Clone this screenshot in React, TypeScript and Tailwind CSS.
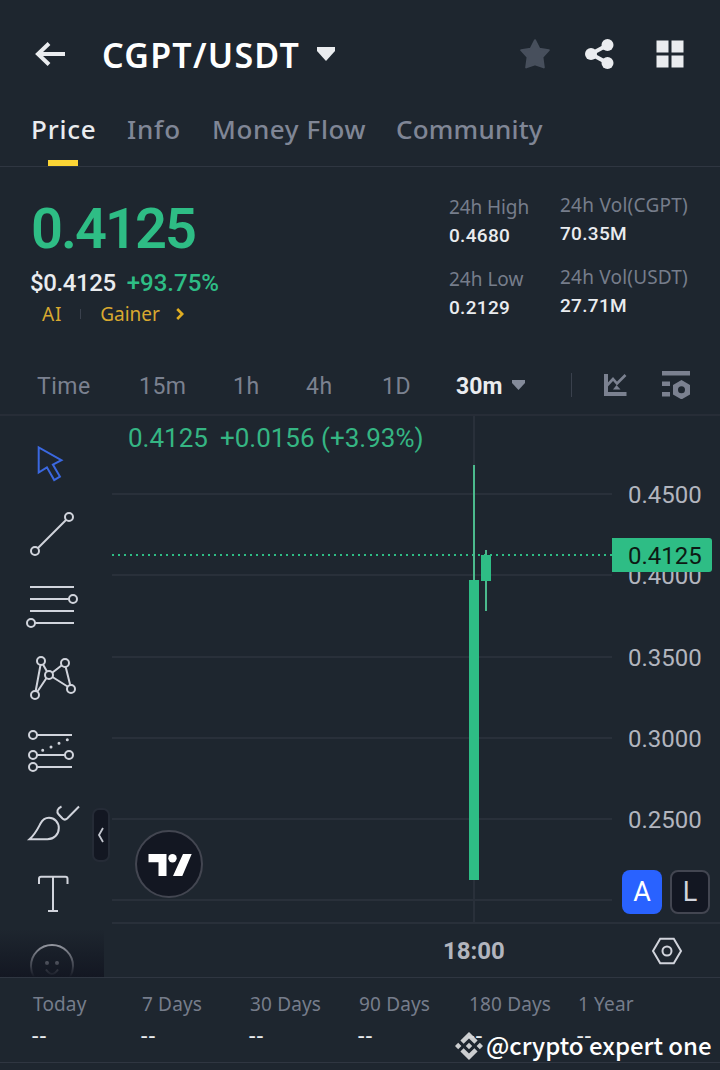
import type { ReactNode } from "react"

const TABS = [
  { label: "Price", width: "w-[96px]", tracking: "tracking-[0.800px]" },
  { label: "Info", width: "w-[85px]", tracking: "tracking-[0.800px]" },
  { label: "Money Flow", width: "w-[184px]", tracking: "tracking-[0.600px]" },
  { label: "Community", width: "w-[160px]", tracking: "tracking-[0.200px]" },
]

const INTERVALS = [
  { label: "Time", width: "w-[102px]" },
  { label: "15m", width: "w-[94px]" },
  { label: "1h", width: "w-[73px]" },
  { label: "4h", width: "w-[76px]" },
  { label: "1D", width: "w-[74px]" },
]

const PERIODS = [
  { label: "Today", width: "w-[109px]" },
  { label: "7 Days", width: "w-[108px]" },
  { label: "30 Days", width: "w-[109px]" },
  { label: "90 Days", width: "w-[110px]" },
  { label: "180 Days", width: "w-[109px]" },
  { label: "1 Year", width: "w-[100px]" },
]

const AXIS = ["0.4500", "0.4000", "0.3500", "0.3000", "0.2500"]
const GRID_LINES = [78, 159, 241, 322, 403, 484]

function Tool({ children, color = "#d1d4dc" }: { children: ReactNode; color?: string }) {
  return (
    <svg
      width="104"
      height="72"
      viewBox="0 0 104 72"
      fill="none"
      stroke={color}
      strokeWidth="2"
      className="block shrink-0"
    >
      {children}
    </svg>
  )
}

function Header() {
  return (
    <header className="flex h-[110px] items-center pl-[35px] pr-9">
      <svg width="30" height="24" viewBox="0 0 30 24" fill="none" stroke="#eaecef" strokeWidth="4" className="mb-0.5">
        <path d="M30 12H3M14 1.500L3 12l11 10.500" />
      </svg>
      <h1 className="ml-[37px] w-[198px] whitespace-nowrap font-['Noto_Sans'] text-[34px] leading-none font-semibold tracking-[1.250px] text-white">
        CGPT/USDT
      </h1>
      <svg width="18" height="14" viewBox="0 0 18 14" fill="#eaecef" className="mb-0.5 ml-[17px]">
        <path d="M0 0h18v4L9 14 0 4z" />
      </svg>
      <div className="mb-0.5 ml-auto flex items-center">
        <svg width="30" height="30" viewBox="0 0 30 30" fill="#474f5c" stroke="#474f5c" strokeWidth="2" strokeLinejoin="round">
          <path d="M15 1.200l4.300 8.600 9.500 1.400-6.400 7 1.400 10.200L15 25.200l-8.800 3.200 1.400-10.200-6.400-7 9.500-1.400z" />
        </svg>
        <svg width="30" height="30" viewBox="0 0 30 30" fill="#eaecef" className="ml-[35px]">
          <path d="M22.500 6L6 15l16.500 9" fill="none" stroke="#eaecef" strokeWidth="4" />
          <circle cx="6" cy="15" r="6" />
          <circle cx="22.500" cy="6" r="6" />
          <circle cx="22.500" cy="24" r="6" />
        </svg>
        <svg width="28" height="28" viewBox="0 0 28 28" fill="#eaecef" className="ml-[41px]">
          <path d="M.5.500h12v12H.5zM15.500.500h12v12h-12zM.5 15.500h12v12H.5zM15.500 15.500h12v12h-12z" />
        </svg>
      </div>
    </header>
  )
}

function TabBar() {
  return (
    <nav className="flex h-[57px] border-b border-[#2f3641] pl-[31px] font-['Noto_Sans'] text-[26px] leading-7 font-medium">
      {TABS.map((tab, i) => (
        <div key={tab.label} className={`${tab.width} flex shrink-0 flex-col justify-between pt-[5px]`}>
          <span className={`${tab.tracking} whitespace-nowrap ${i === 0 ? "text-[#eaecef]" : "text-[#808696]"}`}>
            {tab.label}
          </span>
          {i === 0 && <span className="ml-[17px] h-1.5 w-[30px] bg-[#fcd535]" />}
        </div>
      ))}
    </nav>
  )
}

function Stat({ label, value, tracking }: { label: string; value: string; tracking: string }) {
  return (
    <div className="h-[72px] whitespace-nowrap">
      <div className={`font-['Noto_Sans'] text-[19px] leading-7 text-[#767d8b] ${tracking}`}>{label}</div>
      <div className="mt-px font-[Roboto] text-[19px] leading-7 font-medium tracking-[0.300px] text-[#eaecef]">{value}</div>
    </div>
  )
}

function Summary() {
  return (
    <section className="flex h-[185px]">
      <div className="w-[449px] pt-[34px] pl-[31px]">
        <div className="font-[Roboto] text-[56px] leading-[56px] font-semibold tracking-[-2px] text-[#2ebd85]">
          0.4125
        </div>
        <div className="mt-3 -ml-px flex gap-[11px] font-[Roboto] text-[24px] leading-7 font-medium">
          <span className="tracking-[-0.400px] text-[#eaecef]">$0.4125</span>
          <span className="text-[#2ebd85]">+93.75%</span>
        </div>
        <div className="mt-[3px] flex items-center pl-[11px] font-['Noto_Sans'] text-[19px] leading-7 text-[#d9a92f]">
          <span className="tracking-[0.800px]">AI</span>
          <span className="mr-[19px] ml-[18px] h-2.5 w-px bg-[#3a414d]" />
          <span>Gainer</span>
          <svg width="8" height="12" viewBox="0 0 8 12" fill="none" stroke="#e0ad22" strokeWidth="2.600" className="ml-4">
            <path d="M1.200 1l5 5-5 5" />
          </svg>
        </div>
      </div>
      <div className="w-[111px] pt-[26px]">
        <Stat label="24h High" value="0.4680" tracking="tracking-[-0.100px]" />
        <Stat label="24h Low" value="0.2129" tracking="tracking-normal" />
      </div>
      <div className="pt-[23.500px]">
        <Stat label="24h Vol(CGPT)" value="70.35M" tracking="tracking-[0.250px]" />
        <Stat label="24h Vol(USDT)" value="27.71M" tracking="tracking-[0.200px]" />
      </div>
    </section>
  )
}

function IntervalBar() {
  return (
    <div className="flex h-16 items-center border-b-2 border-[#272d37] pt-[7px] pl-[37px] font-[Roboto] text-[23px] leading-7 text-[#7b8190]">
      {INTERVALS.map((item) => (
        <span key={item.label} className={`${item.width} shrink-0 tracking-[0.500px]`}>
          {item.label}
        </span>
      ))}
      <span className="w-[47px] font-bold text-[#eaecef]">30m</span>
      <svg width="13" height="10" viewBox="0 0 13 10" fill="#848b9a" className="mb-1 ml-[9px]">
        <path d="M0 0h13v3l-6.500 7L0 3z" />
      </svg>
      <span className="mb-1 ml-[46px] h-6 w-px bg-[#3a414d]" />
      <svg width="23" height="22" viewBox="0 0 23 22" fill="none" stroke="#7b8190" className="mb-1 ml-8">
        <path d="M2 0v20h20.500" strokeWidth="4" />
        <path d="M3 11.500l6-6.500 4 4.500 8.500-8.500" strokeWidth="2.600" />
        <path d="M9 15.500l3.500-4.500 4 4.500z" fill="#7b8190" stroke="none" />
      </svg>
      <svg width="28" height="28" viewBox="0 0 28 28" fill="#7b8190" className="mb-[3px] ml-[35px]">
        <path d="M0 0h28v4.500H0zM0 10.500h8V15H0zM0 21h8v4.500H0z" />
        <path
          fillRule="evenodd"
          d="M19.500 9l8.500 4.900v9.700l-8.500 4.800-8.500-4.800v-9.700zM19.500 15.300a3.500 3.500 0 100 7 3.500 3.500 0 000-7z"
        />
      </svg>
    </div>
  )
}

function Toolbar() {
  return (
    <aside className="relative h-[561px] w-[112px] shrink-0 overflow-hidden pt-[11px]">
      <Tool color="#3b68e0">
        <path d="M38.700 20.500v25l8.200-5.200 7.300 12.700 5.700-3.400-7-12 8.500-4.400z" />
      </Tool>
      <Tool>
        <circle cx="69" cy="18" r="4" />
        <circle cx="35" cy="52" r="4" />
        <path d="M38 49l28-28" />
      </Tool>
      <Tool>
        <path d="M30 16h44M30 28h39M30 40h44M35 52h39" />
        <circle cx="73" cy="28" r="4" />
        <circle cx="31" cy="52" r="4" />
      </Tool>
      <Tool>
        <circle cx="41" cy="18" r="4" />
        <circle cx="65" cy="20" r="4" />
        <circle cx="49" cy="32" r="4" />
        <circle cx="71" cy="46" r="4" />
        <circle cx="35" cy="52" r="4" />
        <path d="M40.500 22L35.700 48M43 21.500l4 7M52.500 29.500l9-7M65.700 24l4.500 18M52.500 34l15 9.500M46.500 35l-9 13.500" />
      </Tool>
      <Tool>
        <circle cx="33" cy="20" r="4" />
        <circle cx="33" cy="40" r="4" />
        <circle cx="33" cy="52" r="4" />
        <circle cx="69" cy="40" r="4" />
        <path d="M37 20h35M37 40h28M37 52h35" />
        <path d="M42.700 35.300h.01M51 32h.01M59 28.300h.01M67.300 24.700h.01" strokeWidth="3" strokeLinecap="round" />
      </Tool>
      <Tool>
        <path d="M29.500 52.300c6-5.500 8.500-11 11-15.800 2.200-4.200 5-5.800 8.500-5.800 5.500 0 9.800 4.600 9.800 10.300 0 6.400-4.800 11.300-11.300 11.300z" />
        <path d="M61.500 19.500c-4.500 2-5 5.500-3 7.800l4 4.200c1.500 1.500 3.300 1.300 4.700 0L79 19.500" />
      </Tool>
      <Tool>
        <path d="M39 25v-5.300q0-2 2-2h24.500q2 0 2 2V25M53 17.700V52M48 52h10" />
      </Tool>
      <Tool color="#d1d4dc">
        <circle cx="52" cy="35" r="21" />
        <path d="M46 38.500q6 9 12 0" />
        <circle cx="47" cy="32" r="2" fill="#d1d4dc" stroke="none" />
        <circle cx="57" cy="32" r="2" fill="#d1d4dc" stroke="none" />
      </Tool>
      <div className="absolute bottom-0 left-0 h-[48px] w-[104px] bg-linear-to-t from-[#131722] to-[#13172200]" />
      <div className="absolute top-[392px] left-[92px] flex h-[54px] w-[18px] items-center justify-center rounded-[7px] border-2 border-[#252b36] bg-[#131722]">
        <svg width="7" height="16" viewBox="0 0 7 16" fill="none" stroke="#c3c6cf" strokeWidth="1.800" className="-ml-px">
          <path d="M6 1L2 8l4 7" />
        </svg>
      </div>
    </aside>
  )
}

function Chart() {
  return (
    <div className="relative h-[506px] w-[500px] shrink-0">
      <svg width="500" height="506" viewBox="0 0 500 506" className="block">
        {GRID_LINES.map((y) => (
          <path key={y} d={`M0 ${y}h500`} stroke="#29303a" strokeWidth="2" />
        ))}
        <path d="M362 0v506" stroke="#29303a" strokeWidth="2" />
        <path d="M0 139h500" stroke="#2ebd85" strokeWidth="2" strokeDasharray="2 4" />
        <path d="M362 49v120M374 134v61" stroke="#4bb98c" strokeWidth="2" />
        <path d="M357 164h10v300h-10zM369 139h10v26h-10z" fill="#2ebd85" />
      </svg>
      <div className="absolute top-2 left-4 flex gap-3 whitespace-nowrap font-[Roboto] text-[26px] leading-7 text-[#35b583]">
        <span>0.4125</span>
        <span>+0.0156 (+3.93%)</span>
      </div>
      <div className="absolute top-[414px] left-[23px] flex h-[68px] w-[68px] items-center justify-center rounded-full border-2 border-[#434651] bg-[#131722]">
        <svg width="44" height="22" viewBox="0 0 44 22" fill="#fff" className="mt-0.5 ml-px">
          <path d="M.5 0h18v22h-8V8.300H.5zM35 0h8.700L34.300 22H25z" />
          <circle cx="24.500" cy="4.200" r="4.200" />
        </svg>
      </div>
    </div>
  )
}

function PriceAxis() {
  return (
    <div className="relative h-[506px] grow pt-[39px] font-[Roboto] text-[24px] text-[#b2b5be]">
      {AXIS.map((price) => (
        <div key={price} className="h-[81.250px] pl-4 leading-[81.250px]">
          {price}
        </div>
      ))}
      <div className="absolute top-[122px] left-0 h-[34px] w-[100px] rounded-r-[3px] bg-[#2ebd85] pl-4 leading-[36px] text-[#0d1a14]">
        0.4125
      </div>
      <div className="absolute top-[454px] left-2.5 flex gap-2 text-[27px] leading-none">
        <span className="flex h-11 w-10 items-center justify-center rounded-lg bg-[#2962ff] text-white">A</span>
        <span className="flex h-11 w-10 items-center justify-center rounded-lg border-2 border-[#434651] bg-[#131722] text-[#d1d4dc]">
          L
        </span>
      </div>
    </div>
  )
}

function ChartPanel() {
  return (
    <section className="flex h-[561px]">
      <Toolbar />
      <div className="grow">
        <div className="flex">
          <Chart />
          <PriceAxis />
        </div>
        <div className="flex h-[55px] items-center border-t-2 border-[#29303a] pb-[3px]">
          <span className="w-[500px] pt-1 pl-[331px] font-[Roboto] text-[24px] leading-7 font-bold text-[#b2b5be]">18:00</span>
          <svg width="32" height="28" viewBox="0 0 32 28" fill="none" stroke="#d1d4dc" strokeWidth="2" className="mt-1 ml-[39px]">
            <path d="M9.200 1.700h13.600L30 14l-7.200 12.300H9.200L2 14z" />
            <circle cx="16" cy="14" r="4.500" />
          </svg>
        </div>
      </div>
    </section>
  )
}

function Performance() {
  return (
    <footer className="flex h-[86px] border-y border-[#2f3641] pt-3 pl-[33px]">
      {PERIODS.map((period) => (
        <div key={period.label} className={`${period.width} shrink-0`}>
          <div className="font-['Noto_Sans'] text-[19px] leading-7 tracking-[0.150px] text-[#767d8b]">{period.label}</div>
          <div className="mt-3 -ml-px h-3.5 font-[Roboto] text-[23px] leading-[14px] tracking-[1.500px] text-[#eaecef]">
            --
          </div>
        </div>
      ))}
    </footer>
  )
}

function Watermark() {
  return (
    <div className="absolute top-[1027px] left-[455px] flex items-center">
      <svg width="28" height="28" viewBox="0 0 28 28" fill="#d6d7d9" fillOpacity="0.95" className="mt-0.5">
        <path d="M14 0l8.600 8.600-3.200 3.200L14 6.400l-5.400 5.400-3.200-3.200zM14 28l8.600-8.600-3.200-3.200-5.400 5.400-5.400-5.400-3.200 3.200zM14 10.800l3.200 3.200-3.200 3.200-3.200-3.200zM3.200 10.800L6.400 14l-3.200 3.200L0 14zM24.800 10.800L28 14l-3.200 3.200-3.200-3.200z" />
      </svg>
      <span className="ml-[3px] whitespace-nowrap font-['Noto_Sans_CJK_SC',sans-serif] text-[24px] leading-9 font-medium text-white">
        @crypto expert one
      </span>
    </div>
  )
}

export default function App() {
  return (
    <main className="relative h-[1070px] w-[720px] overflow-hidden bg-[#1e262f]">
      <Header />
      <TabBar />
      <Summary />
      <IntervalBar />
      <ChartPanel />
      <Performance />
      <Watermark />
    </main>
  )
}
